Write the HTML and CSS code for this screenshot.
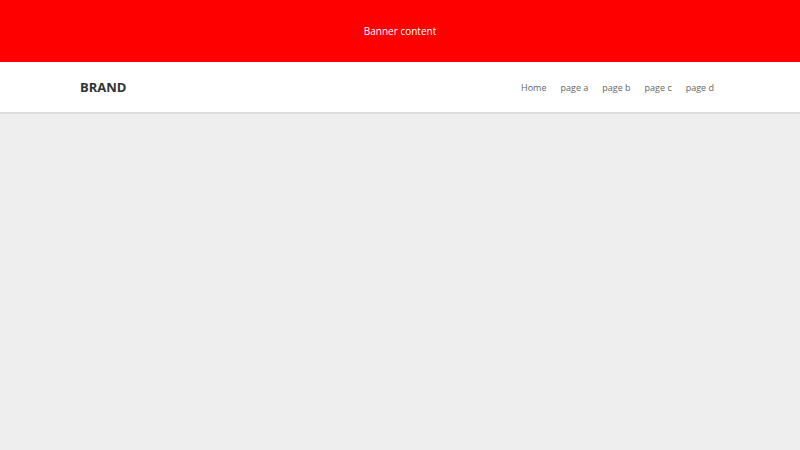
FILE: index.html
```html
<!DOCTYPE html>
<html>
<head>
<meta charset="utf-8">
<link rel="stylesheet" href="styles.css">
</head>
<body>
<div class="banner">Banner content</div>
<header class="navbar">
  <div class="container">
    <div class="brand">BRAND</div>
    <nav class="links">
      <a href="#">Home</a>
      <a href="#">page a</a>
      <a href="#">page b</a>
      <a href="#">page c</a>
      <a href="#">page d</a>
    </nav>
  </div>
</header>
<main class="content"></main>
</body>
</html>
```
FILE: styles.css
```css
html, body {
  margin: 0;
  padding: 0;
  height: 100%;
}
body {
  background: #eeeeee;
  font-family: "Open Sans", "Liberation Sans", sans-serif;
}
.banner {
  height: 62px;
  background: #ff0000;
  color: #ffffff;
  font-size: 10px;
  display: flex;
  align-items: center;
  justify-content: center;
}
.navbar {
  background: #ffffff;
  height: 50px;
  border-bottom: 2px solid #dddddd;
}
.container {
  width: 640px;
  margin: 0 auto;
  height: 100%;
  display: flex;
  align-items: center;
  justify-content: space-between;
}
.brand {
  font-weight: 700;
  font-size: 13px;
  color: #333333;
}
.links {
  display: flex;
}
.links a {
  color: #666666;
  text-decoration: none;
  font-size: 9px;
  padding: 0 7px;
}
.links a:last-child {
  padding-right: 6px;
}
```
